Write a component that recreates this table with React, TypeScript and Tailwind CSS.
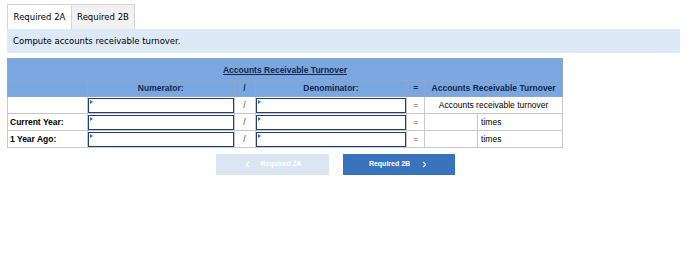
import { ChevronLeft, ChevronRight } from "lucide-react";

const rows = [
  { label: "", result: "Accounts receivable turnover" },
  { label: "Current Year:", result: "times" },
  { label: "1 Year Ago:", result: "times" },
];

function Field() {
  return (
    <div className="relative h-[15px] border border-[#1f3f6e] bg-white">
      <span className="absolute left-[1px] top-[1px] h-0 w-0 border-y-[2px] border-l-[3px] border-y-transparent border-l-[#3b6fb6]" />
    </div>
  );
}

export default function App() {
  return (
    <div className="h-[271px] w-[700px] bg-white pt-[4px] pl-[7px] font-['Liberation_Sans',Arial,sans-serif] text-black">
      {/* tabs */}
      <div className="flex h-[25px] w-[673px] font-['DejaVu_Sans',Verdana,sans-serif] text-[8.5px]">
        <div className="flex w-[65px] items-center justify-center border border-b-0 border-[#d4d4d4] bg-white">Required 2A</div>
        <div className="flex w-[63px] items-center justify-center border-r border-t border-[#d4d4d4] bg-[#f1f1f1]">Required 2B</div>
      </div>
      <div className="flex h-[24px] w-[673px] items-center bg-[#dde9f6] pl-[6px] font-['DejaVu_Sans',Verdana,sans-serif] text-[8.5px]">
        Compute accounts receivable turnover.
      </div>

      {/* table */}
      <table className="mt-[5px] w-[556px] border-collapse text-[8.5px]">
        <colgroup>
          <col className="w-[80px]" />
          <col className="w-[147px]" />
          <col className="w-[21px]" />
          <col className="w-[152px]" />
          <col className="w-[18px]" />
          <col className="w-[53px]" />
          <col className="w-[85px]" />
        </colgroup>
        <thead>
          <tr className="h-[22px] bg-[#7ba7e1]">
            <th colSpan={7} className="border border-[#8ea6c8] pt-[1px] font-bold text-[#13284a] underline">
              Accounts Receivable Turnover
            </th>
          </tr>
          <tr className="h-[16px] bg-[#7ba7e1] font-bold text-[#13284a]">
            <th className="border border-[#8ea6c8]" />
            <th className="border border-[#8ea6c8]">Numerator:</th>
            <th className="border border-[#8ea6c8]">/</th>
            <th className="border border-[#8ea6c8]">Denominator:</th>
            <th className="border border-[#8ea6c8]">=</th>
            <th colSpan={2} className="border border-[#8ea6c8] text-center">Accounts Receivable Turnover</th>
          </tr>
        </thead>
        <tbody>
          {rows.map((r, i) => (
            <tr key={i} className="h-[17px]">
              <td className="border border-[#c8c8c8] pl-[2px] font-bold">{r.label}</td>
              <td className="border border-[#c8c8c8] p-0">
                <Field />
              </td>
              <td className="border border-[#c8c8c8] text-center text-[#444]">/</td>
              <td className="border border-[#c8c8c8] p-0">
                <Field />
              </td>
              <td className="border border-[#c8c8c8] text-center text-[#444]">=</td>
              {i === 0 ? (
                <td colSpan={2} className="border border-[#c8c8c8] text-center">{r.result}</td>
              ) : (
                <>
                  <td className="border border-[#c8c8c8]" />
                  <td className="border border-[#c8c8c8] pl-[3px]">{r.result}</td>
                </>
              )}
            </tr>
          ))}
        </tbody>
      </table>

      {/* nav */}
      <div className="mt-[6px] flex w-[673px] pl-[209px] text-[7px] font-bold">
        <button className="flex h-[21px] w-[113px] items-center justify-center gap-[8px] bg-[#dce6f2] text-white">
          <ChevronLeft size={9} strokeWidth={3} />
          Required 2A
        </button>
        <button className="ml-[14px] flex h-[21px] w-[112px] items-center justify-center gap-[10px] bg-[#3a73bd] text-white">
          Required 2B
          <ChevronRight size={9} strokeWidth={3} />
        </button>
      </div>
    </div>
  );
}
